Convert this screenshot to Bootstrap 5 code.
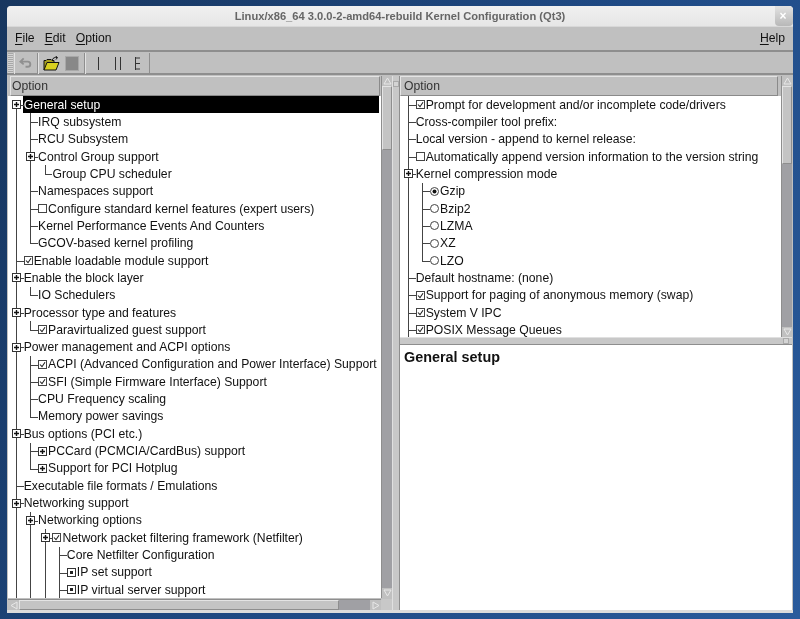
<!DOCTYPE html>
<html lang="en">
<head>
<meta charset="utf-8">
<title>Linux/x86_64 3.0.0-2-amd64-rebuild Kernel Configuration (Qt3)</title>
<link rel="stylesheet" href="https://cdn.jsdelivr.net/npm/bootstrap@5.3.0/dist/css/bootstrap.min.css">
<style>
html,body{height:619px;overflow:hidden}
body{background:linear-gradient(120deg,#17365f 0%,#1f4a85 55%,#2a5b9c 100%);font-family:"Liberation Sans",Arial,sans-serif;font-size:12.2px;line-height:1;color:#111}
.qwin{width:786px;height:607px;margin:6px 0 0 7px;background:#c0c0c0;border-radius:4px 4px 0 0;overflow:hidden;border-bottom:3px solid #dcdcdc;filter:blur(.3px)}
.qtitle{height:21px;background:linear-gradient(#f0f0f0,#e6e6e6);border-bottom:1px solid #d8d8d8;font-size:11.15px;font-weight:700;color:#666}
.qtitle-t{flex:1;text-align:center;padding:2px 0 0 18px}
.qclose{width:18px;height:20px;background:linear-gradient(#e2e2e2,#b8b8b8);border-radius:0 4px 4px 4px;color:#fff;font-size:12px;font-weight:700;padding-right:2px}
.qmenu{height:25px;padding:0 8px;gap:10px;background:#c0c0c0;border-bottom:2px solid #8e8e8e}
.qmenu u{text-underline-offset:2px}
.qtool{height:23px;background:#c0c0c0;border-bottom:2px solid #8e8e8e;padding:1px 0 0 1px}
.qgrip{width:5px;height:20px;margin-right:1px;background:repeating-linear-gradient(#a8a8a8 0 1px,#d4d4d4 1px 2px)}
.qgroup{height:21px;border-left:1px solid #e2e2e2;border-right:1px solid #8e8e8e;padding:0 4px}
.qg1{width:24px}.qg2{width:47px;gap:5px}.qg3{width:65px;justify-content:space-between;padding:0 8px 0 11px}
.qstop{width:14px;height:15px;background:#888;border:1px solid #a8a8a8}
.qmain{height:535px;padding:1px 0 0 1px}
.qleft{width:384px}
.qright{width:392px}
.qsplit-v{width:8px;border-left:1px solid #e0e0e0;border-right:1px solid #8e8e8e;background:#c8c8c8;padding-top:5px}
.qgrab{width:6px;height:6px;background:#d4d4d4;border:1px solid #aaa}
.qhead{height:20px;padding-left:3px;background:#c0c0c0;border:1px solid;border-color:#e4e4e4 #8a8a8a #8a8a8a #e4e4e4;color:#333}
.qleft .qhead{margin:0 1px 0 2px;padding-left:1px}
.qright .qhead{margin-right:3px}
.qlist{background:#fff;padding-left:1.3px}
.qlist-l{width:373px;height:502px}
.qlist-r{width:381px;height:241px}
.qtrow{height:17.33px;white-space:nowrap;flex:none}
.qtrow svg{flex:none}
.qsel{background:#000;color:#fff;height:17px;margin-right:2px;padding-left:1px;margin-left:-1px;flex:1}
.gd{display:block;width:14.4px;height:100%;flex:none;position:relative}
.gd::before,.gd::after{content:"";position:absolute;background:#444}
.gd.v::before,.gd.t::before,.gd.x::before{left:6.7px;top:0;bottom:0;width:1px}
.gd.l::before{left:6.7px;top:0;height:50%;width:1px}
.gd.f::before{left:6.7px;top:50%;bottom:0;width:1px}
.gd.t::after,.gd.l::after,.gd.x::after,.gd.f::after{left:6.7px;right:0;top:50%;height:1px}
.gd svg{position:absolute;left:2.7px;top:4px;z-index:1}
.qck{width:9px;height:9px;margin-right:1px}
.qsb{width:11px;border-left:1px solid #8e8e8e;background:#a0a0a4}
.qsb-h{height:11px;background:#a0a0a4;border-top:1px solid #8e8e8e;margin-top:1px}
.qarrow{background:#c0c0c0;flex:none;width:100%;height:10px}
.qarrow-h{width:11px;height:100%;background:#c0c0c0;flex:none}
.qthumb-v{background:#c4c4c4;border:1px solid;border-color:#e4e4e4 #8e8e8e #8e8e8e #e4e4e4;flex:none}
.qthumb-l{height:64px}
.qthumb-r{height:78px}
.qthumb-h{width:320px;background:#c4c4c4;border:1px solid;border-color:#e4e4e4 #8e8e8e #8e8e8e #e4e4e4;flex:none}
.qcorner{width:11px;height:11px;background:#c8c8c8;margin-top:1px;flex:none}
.qsplit-h{height:8px;background:#c8c8c8;border-top:1px solid #e0e0e0;border-bottom:1px solid #8e8e8e;padding-right:3px;flex:none}
.qinfo{background:#fff;padding:5px 4px;font-size:14.4px;font-weight:700;color:#111}
</style>
</head>
<body>
<svg width="0" height="0" class="d-block" aria-hidden="true">
<defs>
<symbol id="exp" viewBox="0 0 9 9"><rect x=".5" y=".5" width="8" height="8" fill="#fff" stroke="#333"/><path d="M2 4.500h5M4.500 2v5" stroke="#111" stroke-width="1.400"/></symbol>
<symbol id="tick" viewBox="0 0 9 9"><rect x=".5" y=".5" width="8" height="8" fill="#fff" stroke="#444"/><path d="M2 4.500l2 2.200L7 2.200" fill="none" stroke="#222" stroke-width="1.100"/></symbol>
<symbol id="box" viewBox="0 0 9 9"><rect x=".5" y=".5" width="8" height="8" fill="#fff" stroke="#444"/></symbol>
<symbol id="mod" viewBox="0 0 9 9"><rect x=".5" y=".5" width="8" height="8" fill="#fff" stroke="#333"/><rect x="3" y="3" width="3" height="3" fill="#222"/></symbol>
<symbol id="ron" viewBox="0 0 9 9"><circle cx="4.500" cy="4.500" r="4" fill="#fff" stroke="#444"/><circle cx="4.500" cy="4.500" r="2" fill="#111"/></symbol>
<symbol id="rof" viewBox="0 0 9 9"><circle cx="4.500" cy="4.500" r="4" fill="#fff" stroke="#444"/></symbol>
</defs>
</svg>
<div class="qwin d-flex flex-column">
  <div class="qtitle d-flex align-items-center">
    <div class="qtitle-t">Linux/x86_64 3.0.0-2-amd64-rebuild Kernel Configuration (Qt3)</div>
    <div class="qclose d-flex align-items-center justify-content-center">×</div>
  </div>
  <div class="qmenu d-flex align-items-center">
    <span><u>F</u>ile</span><span><u>E</u>dit</span><span><u>O</u>ption</span><span class="ms-auto"><u>H</u>elp</span>
  </div>
  <div class="qtool d-flex align-items-center">
    <div class="qgrip"></div>
    <div class="qgroup qg1 d-flex align-items-center justify-content-center">
      <svg width="15" height="12" viewBox="0 0 15 12"><path d="M5 1L1.500 4.500 5 7.500M2 4.500h7.500c3.500 0 3.500 5.500 0 5.500H7" fill="none" stroke="#909090" stroke-width="2"/></svg>
    </div>
    <div class="qgroup qg2 d-flex align-items-center">
      <svg width="17" height="15" viewBox="0 0 17 15"><path d="M1 14V4.500h2l1-1h4l1 1h2V6" fill="#a8a020" stroke="#111"/><path d="M1 14l3-7.500h12L13 14z" fill="#d8d020" stroke="#111"/><path d="M9 4c1-2 3-3 5-2.500M12.500 0l2 1.500-1.500 2" fill="none" stroke="#111"/></svg>
      <div class="qstop"></div>
    </div>
    <div class="qgroup qg3 d-flex align-items-center">
      <svg width="3" height="13" viewBox="0 0 3 13"><path d="M1.500 0v13" stroke="#333"/></svg>
      <svg width="8" height="13" viewBox="0 0 8 13"><path d="M1.500 0v13M6.500 0v13" stroke="#333"/></svg>
      <svg width="6" height="13" viewBox="0 0 6 13"><path d="M.5 0v13M.5 1H5M.5 6.500H5M.5 12H5" fill="none" stroke="#333"/></svg>
    </div>
  </div>
  <div class="qmain d-flex">
    <div class="qleft d-flex flex-column">
      <div class="d-flex flex-grow-1 overflow-hidden">
        <div class="d-flex flex-column">
          <div class="qhead d-flex align-items-center flex-shrink-0">Option</div>
          <div class="qlist qlist-l d-flex flex-column overflow-hidden">
            <div class="qtrow d-flex align-items-center"><i class="gd f"><svg width="9" height="9"><use href="#exp"/></svg></i><span class="qsel d-flex align-items-center">General setup</span></div>
            <div class="qtrow d-flex align-items-center"><i class="gd v"></i><i class="gd t"></i>IRQ subsystem</div>
            <div class="qtrow d-flex align-items-center"><i class="gd v"></i><i class="gd t"></i>RCU Subsystem</div>
            <div class="qtrow d-flex align-items-center"><i class="gd v"></i><i class="gd x"><svg width="9" height="9"><use href="#exp"/></svg></i>Control Group support</div>
            <div class="qtrow d-flex align-items-center"><i class="gd v"></i><i class="gd v"></i><i class="gd l"></i>Group CPU scheduler</div>
            <div class="qtrow d-flex align-items-center"><i class="gd v"></i><i class="gd t"></i>Namespaces support</div>
            <div class="qtrow d-flex align-items-center"><i class="gd v"></i><i class="gd t"></i><svg class="qck" width="9" height="9"><use href="#box"/></svg>Configure standard kernel features (expert users)</div>
            <div class="qtrow d-flex align-items-center"><i class="gd v"></i><i class="gd t"></i>Kernel Performance Events And Counters</div>
            <div class="qtrow d-flex align-items-center"><i class="gd v"></i><i class="gd l"></i>GCOV-based kernel profiling</div>
            <div class="qtrow d-flex align-items-center"><i class="gd t"></i><svg class="qck" width="9" height="9"><use href="#tick"/></svg>Enable loadable module support</div>
            <div class="qtrow d-flex align-items-center"><i class="gd x"><svg width="9" height="9"><use href="#exp"/></svg></i>Enable the block layer</div>
            <div class="qtrow d-flex align-items-center"><i class="gd v"></i><i class="gd l"></i>IO Schedulers</div>
            <div class="qtrow d-flex align-items-center"><i class="gd x"><svg width="9" height="9"><use href="#exp"/></svg></i>Processor type and features</div>
            <div class="qtrow d-flex align-items-center"><i class="gd v"></i><i class="gd l"></i><svg class="qck" width="9" height="9"><use href="#tick"/></svg>Paravirtualized guest support</div>
            <div class="qtrow d-flex align-items-center"><i class="gd x"><svg width="9" height="9"><use href="#exp"/></svg></i>Power management and ACPI options</div>
            <div class="qtrow d-flex align-items-center"><i class="gd v"></i><i class="gd t"></i><svg class="qck" width="9" height="9"><use href="#tick"/></svg>ACPI (Advanced Configuration and Power Interface) Support</div>
            <div class="qtrow d-flex align-items-center"><i class="gd v"></i><i class="gd t"></i><svg class="qck" width="9" height="9"><use href="#tick"/></svg>SFI (Simple Firmware Interface) Support</div>
            <div class="qtrow d-flex align-items-center"><i class="gd v"></i><i class="gd t"></i>CPU Frequency scaling</div>
            <div class="qtrow d-flex align-items-center"><i class="gd v"></i><i class="gd l"></i>Memory power savings</div>
            <div class="qtrow d-flex align-items-center"><i class="gd x"><svg width="9" height="9"><use href="#exp"/></svg></i>Bus options (PCI etc.)</div>
            <div class="qtrow d-flex align-items-center"><i class="gd v"></i><i class="gd t"></i><svg class="qck" width="9" height="9"><use href="#exp"/></svg>PCCard (PCMCIA/CardBus) support</div>
            <div class="qtrow d-flex align-items-center"><i class="gd v"></i><i class="gd l"></i><svg class="qck" width="9" height="9"><use href="#exp"/></svg>Support for PCI Hotplug</div>
            <div class="qtrow d-flex align-items-center"><i class="gd t"></i>Executable file formats / Emulations</div>
            <div class="qtrow d-flex align-items-center"><i class="gd x"><svg width="9" height="9"><use href="#exp"/></svg></i>Networking support</div>
            <div class="qtrow d-flex align-items-center"><i class="gd v"></i><i class="gd x"><svg width="9" height="9"><use href="#exp"/></svg></i>Networking options</div>
            <div class="qtrow d-flex align-items-center"><i class="gd v"></i><i class="gd v"></i><i class="gd x"><svg width="9" height="9"><use href="#exp"/></svg></i><svg class="qck" width="9" height="9"><use href="#tick"/></svg>Network packet filtering framework (Netfilter)</div>
            <div class="qtrow d-flex align-items-center"><i class="gd v"></i><i class="gd v"></i><i class="gd v"></i><i class="gd t"></i>Core Netfilter Configuration</div>
            <div class="qtrow d-flex align-items-center"><i class="gd v"></i><i class="gd v"></i><i class="gd v"></i><i class="gd t"></i><svg class="qck" width="9" height="9"><use href="#mod"/></svg>IP set support</div>
            <div class="qtrow d-flex align-items-center"><i class="gd v"></i><i class="gd v"></i><i class="gd v"></i><i class="gd t"></i><svg class="qck" width="9" height="9"><use href="#mod"/></svg>IP virtual server support</div>
          </div>
        </div>
        <div class="qsb d-flex flex-column align-items-center flex-grow-1">
          <div class="qarrow d-flex justify-content-center align-items-center"><svg width="9" height="8" viewBox="0 0 9 8"><path d="M4.500 1L8 7H1z" fill="#c0c0c0" stroke="#e8e8e8"/></svg></div>
          <div class="qthumb-v qthumb-l w-100"></div>
          <div class="flex-grow-1"></div>
          <div class="qarrow d-flex justify-content-center align-items-center"><svg width="9" height="8" viewBox="0 0 9 8"><path d="M1 1h7L4.500 7z" fill="#c0c0c0" stroke="#e8e8e8"/></svg></div>
        </div>
      </div>
      <div class="d-flex flex-shrink-0">
        <div class="qsb-h d-flex flex-grow-1">
          <div class="qarrow-h d-flex justify-content-center align-items-center"><svg width="8" height="9" viewBox="0 0 8 9"><path d="M1 4.500L7 1v7z" fill="#c0c0c0" stroke="#e8e8e8"/></svg></div>
          <div class="qthumb-h"></div>
          <div class="flex-grow-1"></div>
          <div class="qarrow-h d-flex justify-content-center align-items-center"><svg width="8" height="9" viewBox="0 0 8 9"><path d="M7 4.500L1 1v7z" fill="#c0c0c0" stroke="#e8e8e8"/></svg></div>
        </div>
        <div class="qcorner"></div>
      </div>
    </div>
    <div class="qsplit-v d-flex justify-content-center"><div class="qgrab"></div></div>
    <div class="qright d-flex flex-column">
      <div class="d-flex flex-shrink-0">
        <div class="d-flex flex-column">
          <div class="qhead d-flex align-items-center">Option</div>
          <div class="qlist qlist-r d-flex flex-column overflow-hidden">
            <div class="qtrow d-flex align-items-center"><i class="gd t"></i><svg class="qck" width="9" height="9"><use href="#tick"/></svg>Prompt for development and/or incomplete code/drivers</div>
            <div class="qtrow d-flex align-items-center"><i class="gd t"></i>Cross-compiler tool prefix:</div>
            <div class="qtrow d-flex align-items-center"><i class="gd t"></i>Local version - append to kernel release:</div>
            <div class="qtrow d-flex align-items-center"><i class="gd t"></i><svg class="qck" width="9" height="9"><use href="#box"/></svg>Automatically append version information to the version string</div>
            <div class="qtrow d-flex align-items-center"><i class="gd x"><svg width="9" height="9"><use href="#exp"/></svg></i>Kernel compression mode</div>
            <div class="qtrow d-flex align-items-center"><i class="gd v"></i><i class="gd t"></i><svg class="qck" width="9" height="9"><use href="#ron"/></svg>Gzip</div>
            <div class="qtrow d-flex align-items-center"><i class="gd v"></i><i class="gd t"></i><svg class="qck" width="9" height="9"><use href="#rof"/></svg>Bzip2</div>
            <div class="qtrow d-flex align-items-center"><i class="gd v"></i><i class="gd t"></i><svg class="qck" width="9" height="9"><use href="#rof"/></svg>LZMA</div>
            <div class="qtrow d-flex align-items-center"><i class="gd v"></i><i class="gd t"></i><svg class="qck" width="9" height="9"><use href="#rof"/></svg>XZ</div>
            <div class="qtrow d-flex align-items-center"><i class="gd v"></i><i class="gd l"></i><svg class="qck" width="9" height="9"><use href="#rof"/></svg>LZO</div>
            <div class="qtrow d-flex align-items-center"><i class="gd t"></i>Default hostname: (none)</div>
            <div class="qtrow d-flex align-items-center"><i class="gd t"></i><svg class="qck" width="9" height="9"><use href="#tick"/></svg>Support for paging of anonymous memory (swap)</div>
            <div class="qtrow d-flex align-items-center"><i class="gd t"></i><svg class="qck" width="9" height="9"><use href="#tick"/></svg>System V IPC</div>
            <div class="qtrow d-flex align-items-center"><i class="gd t"></i><svg class="qck" width="9" height="9"><use href="#tick"/></svg>POSIX Message Queues</div>
          </div>
        </div>
        <div class="qsb d-flex flex-column align-items-center flex-grow-1">
          <div class="qarrow d-flex justify-content-center align-items-center"><svg width="9" height="8" viewBox="0 0 9 8"><path d="M4.500 1L8 7H1z" fill="#c0c0c0" stroke="#e8e8e8"/></svg></div>
          <div class="qthumb-v qthumb-r w-100"></div>
          <div class="flex-grow-1"></div>
          <div class="qarrow d-flex justify-content-center align-items-center"><svg width="9" height="8" viewBox="0 0 9 8"><path d="M1 1h7L4.500 7z" fill="#c0c0c0" stroke="#e8e8e8"/></svg></div>
        </div>
      </div>
      <div class="qsplit-h d-flex justify-content-end align-items-center"><div class="qgrab"></div></div>
      <div class="qinfo flex-grow-1">General setup</div>
    </div>
  </div>
</div>
<script src="https://cdn.jsdelivr.net/npm/bootstrap@5.3.0/dist/js/bootstrap.bundle.min.js"></script>
</body>
</html>
